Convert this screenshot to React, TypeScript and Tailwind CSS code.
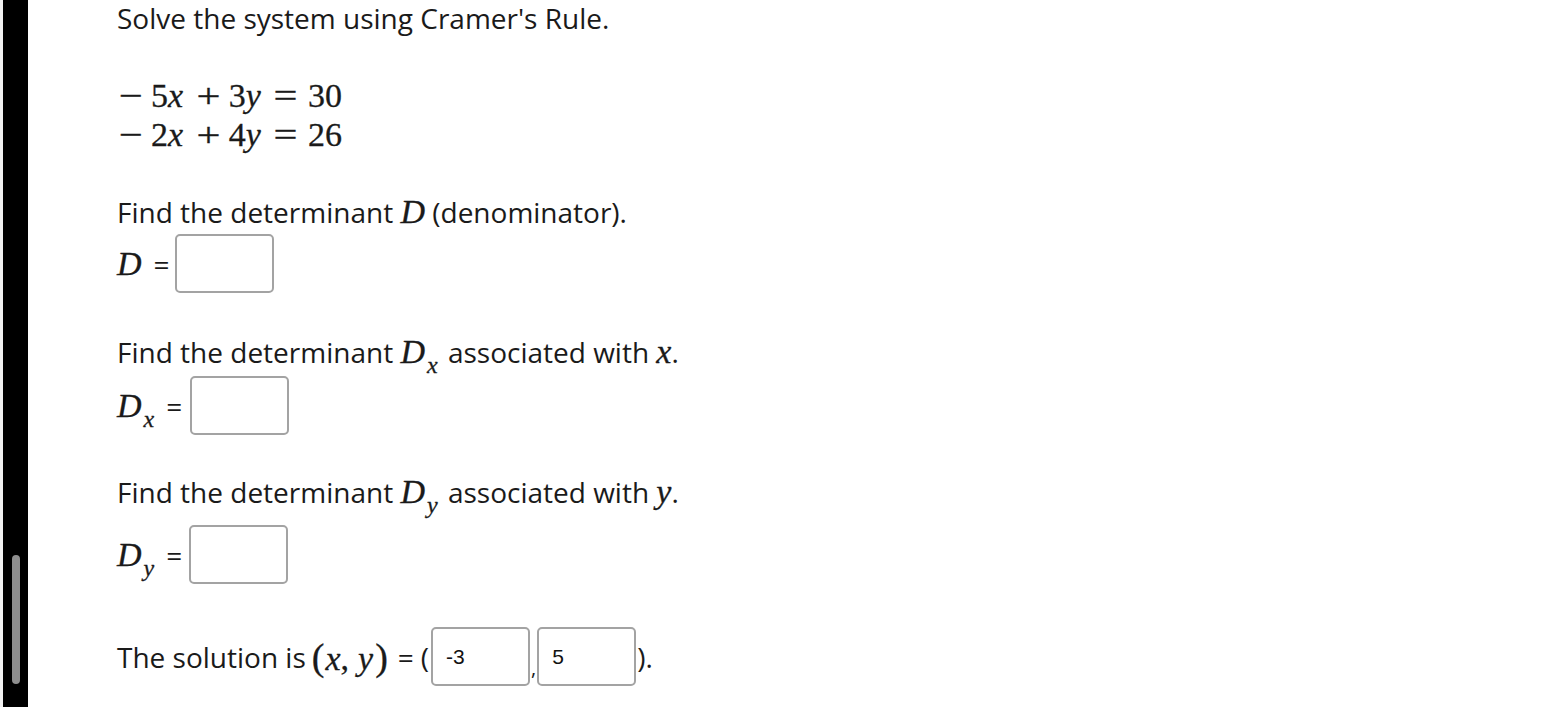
import React from "react";

const Op = ({ c, wide }: { c: string; wide?: boolean }) => (
  <span className="inline-block w-[0.778em] text-center">
    {wide ? <span className="inline-block scale-x-[1.25]">{c}</span> : c}
  </span>
);

const V = ({ c }: { c: string }) => <span className="italic">{c}</span>;

const VX = () => <span className="inline-block w-[0.572em] italic">x</span>;
const VY = () => <span className="inline-block w-[0.49em] italic">y</span>;

const Box = ({ value }: { value?: string }) => (
  <div className="flex h-[59px] w-[99px] shrink-0 items-center rounded-[5px] border-2 border-[#a3a3a3] bg-white pl-[13px] font-['Liberation_Sans'] text-[21px] leading-none text-[#111]">
    {value}
  </div>
);

const MathSpan = ({ children }: { children: React.ReactNode }) => (
  <span className="font-['Liberation_Serif'] text-[34px] leading-none [-webkit-text-stroke:0.3px_#1a1a1a]">
    {children}
  </span>
);

const RowMath = ({ children }: { children: React.ReactNode }) => (
  <span className="block h-[34px] font-['Liberation_Serif'] text-[34px] leading-[34px] [-webkit-text-stroke:0.3px_#1a1a1a]">
    {children}
  </span>
);

const Sub = ({ c }: { c: string }) => (
  <span className="ml-[2px] mr-[3px] align-[-10px] text-[24px] italic">{c}</span>
);

const Eq = ({ a, b, c }: { a: string; b: string; c: string }) => (
  <div className="h-[39px]">
    <Op c="−" wide />
    <span className="ml-[7.5px]">{a}</span>
    <VX />
    <span className="ml-[7.5px]" />
    <Op c="+" wide />
    <span className="ml-[7.5px]">{b}</span>
    <VY />
    <span className="ml-[9.5px]" />
    <Op c="=" wide />
    <span className="ml-[9.5px]">{c}</span>
  </div>
);

export default function App() {
  return (
    <div className="flex h-[707px] w-full overflow-hidden bg-white">
      <div className="w-[3px] shrink-0 bg-[#f2f2f2]" />
      <div className="relative w-[25px] shrink-0 bg-black">
        <div className="absolute left-[9px] top-[555px] h-[129px] w-[8px] rounded-full bg-[#8e8e8e]" />
      </div>
      <main className="pl-[89px] font-['Open_Sans'] text-[28px] leading-[40px] text-[#1a1a1a]">
        <p className="-mt-[2px] h-[40px]">Solve the system using Cramer's Rule.</p>

        <div className="mt-[38px] font-['Liberation_Serif'] text-[34px] leading-[39px] [-webkit-text-stroke:0.3px_#1a1a1a]">
          <Eq a="5" b="3" c="30" />
          <Eq a="2" b="4" c="26" />
        </div>

        <p className="mt-[38px] h-[40px]">
          Find the determinant{" "}
          <MathSpan>
            <V c="D" />
          </MathSpan>{" "}
          (denominator).
        </p>
        <div className="mt-[2px] flex h-[59px] items-center">
          <RowMath>
            <V c="D" />
          </RowMath>
          <span className="ml-[12px] mr-[5px]">=</span>
          <Box />
        </div>

        <p className="mt-[39px] h-[40px]">
          Find the determinant{" "}
          <MathSpan>
            <V c="D" />
            <Sub c="x" />
          </MathSpan>{" "}
          associated with{" "}
          <MathSpan>
            <V c="x" />
          </MathSpan>
          .
        </p>
        <div className="mt-[4px] flex h-[59px] items-center">
          <RowMath>
            <V c="D" />
            <Sub c="x" />
          </RowMath>
          <span className="ml-[9px] mr-[8px]">=</span>
          <Box />
        </div>

        <p className="mt-[37px] h-[40px]">
          Find the determinant{" "}
          <MathSpan>
            <V c="D" />
            <Sub c="y" />
          </MathSpan>{" "}
          associated with{" "}
          <MathSpan>
            <V c="y" />
          </MathSpan>
          .
        </p>
        <div className="mt-[13px] flex h-[59px] items-center">
          <RowMath>
            <V c="D" />
            <Sub c="y" />
          </RowMath>
          <span className="ml-[9px] mr-[7px]">=</span>
          <Box />
        </div>

        <div className="mt-[43px] flex h-[59px] items-center">
          <span>The solution is</span>
          <RowMath>
            <span className="ml-[6px] text-[38px]">(</span>
            <span className="ml-[1px]">
              <V c="x" />
            </span>
            <span className="mr-[9px]">,</span>
            <V c="y" />
            <span className="ml-[2px] text-[38px]">)</span>
          </RowMath>
          <span className="ml-[10px]">=</span>
          <span className="ml-[7px] mr-[2px]">(</span>
          <Box value="-3" />
          <span className="mx-[1px] mb-[8px] self-end text-[20px] leading-none">,</span>
          <Box value="5" />
          <span className="ml-[1px]">).</span>
        </div>
      </main>
    </div>
  );
}
